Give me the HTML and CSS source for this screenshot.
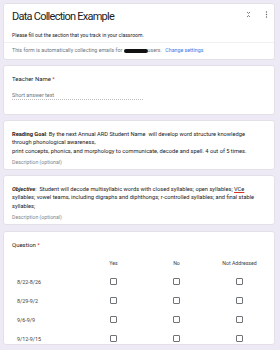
FILE: index.html
```html
<!DOCTYPE html>
<html>
<head>
<meta charset="utf-8">
<link rel="stylesheet" href="styles.css">
</head>
<body>
<main class="page">
  <section class="card head">
    <div class="head-top">
      <h1 class="title">Data Collection Example</h1>
      <div class="tools">
        <svg class="ico" viewBox="0 0 10 10" width="7" height="7"><path d="M3 1.5 L5 3.5 L7 1.5 M3 8.5 L5 6.5 L7 8.5" fill="none" stroke="#5f6368" stroke-width="1.3"/></svg>
        <svg class="ico" viewBox="0 0 10 10" width="7" height="7"><circle cx="5" cy="1.5" r="1" fill="#5f6368"/><circle cx="5" cy="5" r="1" fill="#5f6368"/><circle cx="5" cy="8.5" r="1" fill="#5f6368"/></svg>
      </div>
    </div>
    <p class="desc">Please fill out the section that you track in your classroom.</p>
    <div class="divider"></div>
    <p class="note">This form is automatically collecting emails for <span class="redact"></span>users. <span class="link">Change settings</span></p>
  </section>

  <section class="card q1">
    <p class="qtitle">Teacher Name <span class="star">*</span></p>
    <div class="short">Short answer text</div>
  </section>

  <section class="card block">
    <p class="body"><b>Reading Goal</b>: By the next Annual ARD Student Name&nbsp; will develop word structure knowledge<br>through phonological awareness,<br>print concepts, phonics, and morphology to communicate, decode and spell. 4 out of 5 times.</p>
    <p class="hint">Description (optional)</p>
  </section>

  <section class="card block">
    <p class="body"><b><i>Objective</i></b>:&nbsp; Student will decode multisyllabic words with closed syllables; open syllables; <span class="squig">VCe</span><br>syllables; vowel teams, including digraphs and diphthongs; r-controlled syllables; and final stable<br>syllables;</p>
    <p class="hint">Description (optional)</p>
  </section>

  <section class="card grid-card">
    <p class="qtitle">Question <span class="star">*</span></p>
    <div class="grid">
      <span></span><span class="colh">Yes</span><span class="colh">No</span><span class="colh">Not Addressed</span>
      <span class="rowh">8/22-8/26</span><span class="cell"><i class="box"></i></span><span class="cell"><i class="box"></i></span><span class="cell"><i class="box"></i></span>
      <span class="rowh">8/29-9/2</span><span class="cell"><i class="box"></i></span><span class="cell"><i class="box"></i></span><span class="cell"><i class="box"></i></span>
      <span class="rowh">9/6-9/9</span><span class="cell"><i class="box"></i></span><span class="cell"><i class="box"></i></span><span class="cell"><i class="box"></i></span>
      <span class="rowh">9/12-9/15</span><span class="cell"><i class="box"></i></span><span class="cell"><i class="box"></i></span><span class="cell"><i class="box"></i></span>
    </div>
  </section>
</main>
</body>
</html>
```

FILE: styles.css
```css
* { box-sizing: border-box; }
html, body { margin: 0; padding: 0; }
body {
  background: #eeeaf5;
  font-family: Roboto, "Liberation Sans", sans-serif;
  color: #202124;
  width: 280px;
  height: 350px;
  overflow: hidden;
}
p { margin: 0; }
.page {
  padding: 3px 5px 0 3px;
  display: flex;
  flex-direction: column;
  gap: 5px;
}
.card {
  background: #fff;
  border: 1px solid #e3e0e8;
  border-radius: 3px;
  padding-left: 8px;
  padding-right: 8px;
}
.head { height: 57px; padding-top: 5px; }
.head-top { display: flex; align-items: flex-start; justify-content: space-between; }
.title {
  margin: 0;
  font-weight: 400;
  font-size: 11px;
  line-height: 15px;
  letter-spacing: -0.75px;
  color: #202124;
}
.tools { display: flex; gap: 11px; padding-top: 2px; margin-right: -4px; }
.ico { display: block; }
.desc { font-size: 5.1px; line-height: 8px; margin-top: 7px; color: #202124; }
.divider { height: 1px; background: #f1f1f1; margin: 3px -8px 0; }
.note { font-size: 5.3px; line-height: 8px; margin-top: 3px; color: #70757a; }
.redact {
  display: inline-block;
  width: 24px;
  height: 4px;
  background: #111;
  border-radius: 2px;
  vertical-align: -0.5px;
}
.link { color: #3b78e7; margin-left: 2px; }

.q1 { height: 50px; padding-top: 9px; }
.qtitle { font-size: 6px; line-height: 8px; color: #202124; }
.star { color: #d93025; }
.short {
  margin-top: 8px;
  width: 131px;
  font-size: 5.4px;
  line-height: 8px;
  color: #70757a;
  border-bottom: 1px dotted #bdbdbd;
}

.block { height: 50px; padding-top: 9px; }
.body { font-size: 5.7px; line-height: 8.3px; color: #202124; white-space: nowrap; }
.body b { font-weight: 700; }
.squig { text-decoration: underline solid #d93025; text-decoration-thickness: 0.5px; text-underline-offset: 0.5px; }
.hint { font-size: 5.2px; line-height: 8px; margin-top: 3px; color: #80868b; }

.grid-card { height: 114px; margin-top: 1px; padding-top: 9px; }
.grid {
  display: grid;
  grid-template-columns: 70px 63px 63px 63px;
  grid-auto-rows: 19px;
  margin-top: 4px;
  align-items: center;
}
.colh { text-align: center; font-size: 5.2px; color: #3c4043; }
.rowh { padding-left: 5px; font-size: 5.4px; color: #3c4043; }
.cell { display: flex; justify-content: center; }
.box {
  display: block;
  width: 7px;
  height: 7px;
  border: 1px solid #6f7377;
  border-radius: 1px;
}
```
